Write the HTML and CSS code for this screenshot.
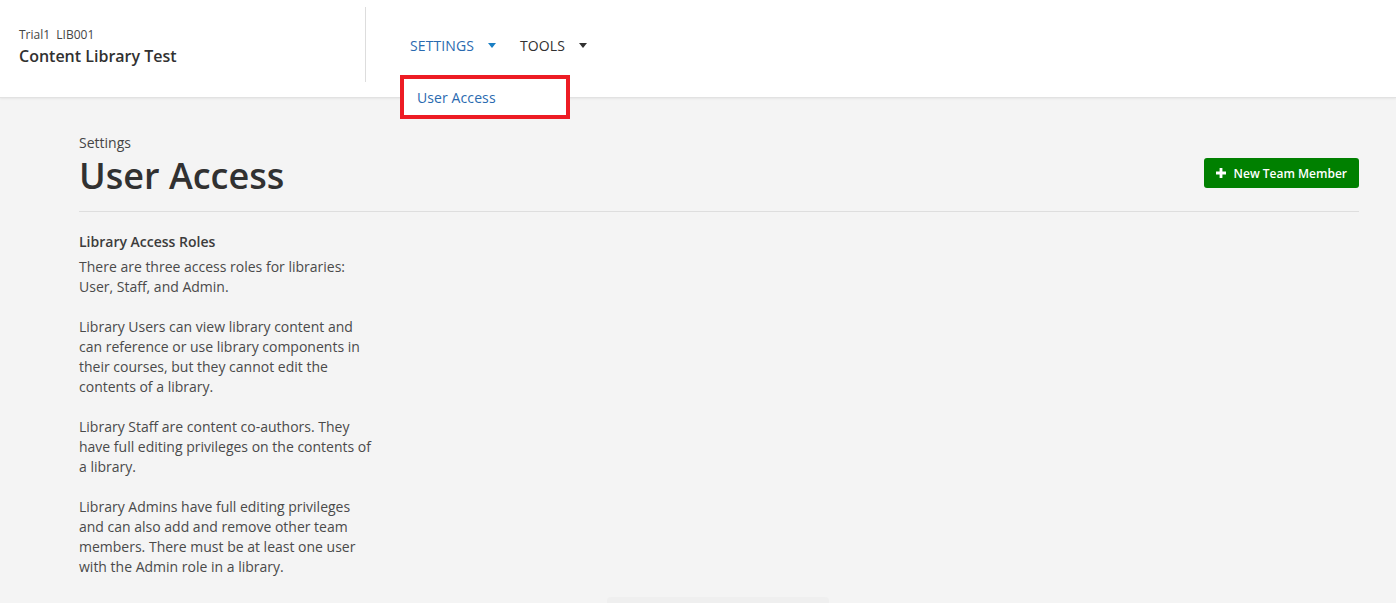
FILE: index.html
```html
<!DOCTYPE html>
<html lang="en">

<head>
    <meta charset="UTF-8">
    <meta name="viewport" content="width=device-width, initial-scale=1.0">
    <title>User Access</title>
    <link rel="stylesheet" href="styles.css">
</head>

<body>
    <header class="topbar">
        <div class="brand">
            <div class="org">Trial1&nbsp; LIB001</div>
            <div class="title">Content Library Test</div>
        </div>
        <nav class="nav">
            <div class="nav-item active">
                <span>SETTINGS</span><span class="caret"></span>
                <div class="dropdown">
                    <a href="#">User Access</a>
                </div>
            </div>
            <div class="nav-item">
                <span>TOOLS</span><span class="caret"></span>
            </div>
        </nav>
    </header>

    <main class="page">
        <div class="page-head">
            <div>
                <div class="crumb">Settings</div>
                <h1>User Access</h1>
            </div>
            <button class="btn-add">
                <svg width="10" height="10" viewBox="0 0 10 10"><path d="M3.6 0h2.8v3.6H10v2.8H6.4V10H3.6V6.4H0V3.6h3.6z" fill="#fff"/></svg>
                New Team Member
            </button>
        </div>

        <section class="roles">
            <h2>Library Access Roles</h2>
            <p>There are three access roles for libraries: User, Staff, and Admin.</p>
            <p>Library Users can view library content and can reference or use library components in their courses, but they cannot edit the contents of a library.</p>
            <p>Library Staff are content co-authors. They have full editing privileges on the contents of a library.</p>
            <p>Library Admins have full editing privileges and can also add and remove other team members. There must be at least one user with the Admin role in a library.</p>
        </section>

        <div class="empty-card"></div>
    </main>
</body>

</html>
```

FILE: styles.css
```css
body {
    margin: 0;
    background: #f4f4f4;
    font-family: "Open Sans", "Liberation Sans", sans-serif;
    color: #313131;
    height: 603px;
    overflow: hidden;
}

.topbar {
    display: flex;
    height: 97px;
    background: #fff;
    border-bottom: 1px solid #e2e2e2;
    box-shadow: 0 1px 2px rgba(0, 0, 0, 0.06);
    position: relative;
    z-index: 2;
}

.brand {
    width: 346px;
    padding: 20px 0 0 19px;
    border-right: 1px solid #ddd;
    margin: 7px 0 15px 0;
}

.org {
    font-size: 12px;
    color: #454545;
    line-height: 16px;
}

.title {
    font-size: 16px;
    font-weight: 600;
    line-height: 22px;
    margin-top: 2px;
}

.nav {
    display: flex;
    padding-left: 44px;
    gap: 24px;
}

.nav-item {
    position: relative;
    display: flex;
    align-items: center;
    height: 91px;
    font-size: 14px;
    color: #313131;
    letter-spacing: 0.1px;
}

.nav-item.active {
    color: #2a6ab0;
}

.caret {
    width: 0;
    height: 0;
    border-left: 4px solid transparent;
    border-right: 4px solid transparent;
    border-top: 5px solid #313131;
    margin-left: 14px;
    margin-top: -1px;
}

.nav-item.active .caret {
    border-top-color: #1a7fc4;
}

.dropdown {
    position: absolute;
    top: 75px;
    left: -10px;
    width: 162px;
    height: 36px;
    background: #fff;
    border: 4px solid #ed1c24;
    display: flex;
    align-items: center;
}

.dropdown a {
    color: #2a6ab0;
    text-decoration: none;
    font-size: 14px;
    padding-left: 13px;
    margin-top: 1px;
}

.page {
    padding: 36px 37px 0 79px;
    position: relative;
}

.page-head {
    display: flex;
    justify-content: space-between;
    align-items: flex-end;
    border-bottom: 1px solid #dedede;
    padding-bottom: 11px;
}

.crumb {
    font-size: 14px;
    color: #454545;
    line-height: 18px;
}

h1 {
    margin: 0;
    font-size: 36px;
    font-weight: 600;
    line-height: 48px;
    color: #313131;
}

.btn-add {
    display: flex;
    align-items: center;
    gap: 8px;
    background: #008000;
    color: #fff;
    border: none;
    border-radius: 3px;
    height: 30px;
    padding: 0 12px;
    font-family: inherit;
    font-size: 12px;
    font-weight: 600;
    margin-bottom: 12px;
}

.roles {
    width: 296px;
    padding-top: 20px;
}

.roles h2 {
    margin: 0 0 5px 0;
    font-size: 14px;
    font-weight: 600;
    line-height: 20px;
    color: #3c3c3c;
}

.roles p {
    margin: 0 0 20px 0;
    font-size: 14px;
    line-height: 20px;
    color: #4a4a4a;
}

.empty-card {
    position: absolute;
    left: 607px;
    top: 499px;
    width: 222px;
    height: 20px;
    background: #efefef;
    border-radius: 4px;
}
```
